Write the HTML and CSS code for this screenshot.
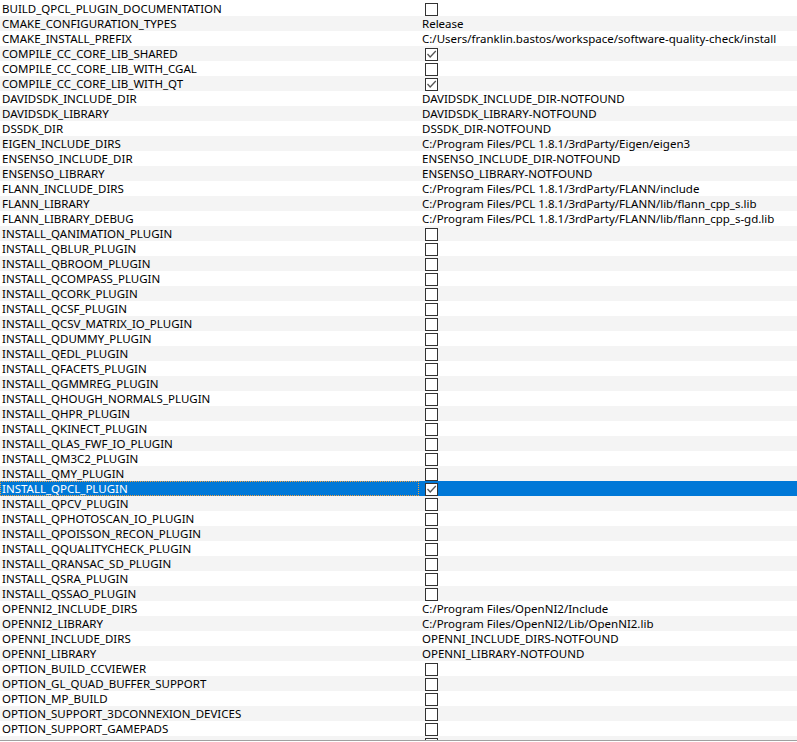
FILE: index.html
```html
<!DOCTYPE html>
<html>
<head>
<meta charset="utf-8">
<link rel="stylesheet" href="styles.css">
</head>
<body>
<div class="table">
<div class="row"><div class="name">BUILD_QPCL_PLUGIN_DOCUMENTATION</div><div class="value"><span class="cb"></span></div></div>
<div class="row"><div class="name">CMAKE_CONFIGURATION_TYPES</div><div class="value">Release</div></div>
<div class="row"><div class="name">CMAKE_INSTALL_PREFIX</div><div class="value">C:/Users/franklin.bastos/workspace/software-quality-check/install</div></div>
<div class="row"><div class="name">COMPILE_CC_CORE_LIB_SHARED</div><div class="value"><span class="cb"><svg viewBox="0 0 11 11" width="11" height="11"><polyline points="1.5,5 4.2,8 9.8,2" fill="none" stroke="#555" stroke-width="1.3"/></svg></span></div></div>
<div class="row"><div class="name">COMPILE_CC_CORE_LIB_WITH_CGAL</div><div class="value"><span class="cb"></span></div></div>
<div class="row"><div class="name">COMPILE_CC_CORE_LIB_WITH_QT</div><div class="value"><span class="cb"><svg viewBox="0 0 11 11" width="11" height="11"><polyline points="1.5,5 4.2,8 9.8,2" fill="none" stroke="#555" stroke-width="1.3"/></svg></span></div></div>
<div class="row"><div class="name">DAVIDSDK_INCLUDE_DIR</div><div class="value">DAVIDSDK_INCLUDE_DIR-NOTFOUND</div></div>
<div class="row"><div class="name">DAVIDSDK_LIBRARY</div><div class="value">DAVIDSDK_LIBRARY-NOTFOUND</div></div>
<div class="row"><div class="name">DSSDK_DIR</div><div class="value">DSSDK_DIR-NOTFOUND</div></div>
<div class="row"><div class="name">EIGEN_INCLUDE_DIRS</div><div class="value">C:/Program Files/PCL 1.8.1/3rdParty/Eigen/eigen3</div></div>
<div class="row"><div class="name">ENSENSO_INCLUDE_DIR</div><div class="value">ENSENSO_INCLUDE_DIR-NOTFOUND</div></div>
<div class="row"><div class="name">ENSENSO_LIBRARY</div><div class="value">ENSENSO_LIBRARY-NOTFOUND</div></div>
<div class="row"><div class="name">FLANN_INCLUDE_DIRS</div><div class="value">C:/Program Files/PCL 1.8.1/3rdParty/FLANN/include</div></div>
<div class="row"><div class="name">FLANN_LIBRARY</div><div class="value">C:/Program Files/PCL 1.8.1/3rdParty/FLANN/lib/flann_cpp_s.lib</div></div>
<div class="row"><div class="name">FLANN_LIBRARY_DEBUG</div><div class="value">C:/Program Files/PCL 1.8.1/3rdParty/FLANN/lib/flann_cpp_s-gd.lib</div></div>
<div class="row"><div class="name">INSTALL_QANIMATION_PLUGIN</div><div class="value"><span class="cb"></span></div></div>
<div class="row"><div class="name">INSTALL_QBLUR_PLUGIN</div><div class="value"><span class="cb"></span></div></div>
<div class="row"><div class="name">INSTALL_QBROOM_PLUGIN</div><div class="value"><span class="cb"></span></div></div>
<div class="row"><div class="name">INSTALL_QCOMPASS_PLUGIN</div><div class="value"><span class="cb"></span></div></div>
<div class="row"><div class="name">INSTALL_QCORK_PLUGIN</div><div class="value"><span class="cb"></span></div></div>
<div class="row"><div class="name">INSTALL_QCSF_PLUGIN</div><div class="value"><span class="cb"></span></div></div>
<div class="row"><div class="name">INSTALL_QCSV_MATRIX_IO_PLUGIN</div><div class="value"><span class="cb"></span></div></div>
<div class="row"><div class="name">INSTALL_QDUMMY_PLUGIN</div><div class="value"><span class="cb"></span></div></div>
<div class="row"><div class="name">INSTALL_QEDL_PLUGIN</div><div class="value"><span class="cb"></span></div></div>
<div class="row"><div class="name">INSTALL_QFACETS_PLUGIN</div><div class="value"><span class="cb"></span></div></div>
<div class="row"><div class="name">INSTALL_QGMMREG_PLUGIN</div><div class="value"><span class="cb"></span></div></div>
<div class="row"><div class="name">INSTALL_QHOUGH_NORMALS_PLUGIN</div><div class="value"><span class="cb"></span></div></div>
<div class="row"><div class="name">INSTALL_QHPR_PLUGIN</div><div class="value"><span class="cb"></span></div></div>
<div class="row"><div class="name">INSTALL_QKINECT_PLUGIN</div><div class="value"><span class="cb"></span></div></div>
<div class="row"><div class="name">INSTALL_QLAS_FWF_IO_PLUGIN</div><div class="value"><span class="cb"></span></div></div>
<div class="row"><div class="name">INSTALL_QM3C2_PLUGIN</div><div class="value"><span class="cb"></span></div></div>
<div class="row"><div class="name">INSTALL_QMY_PLUGIN</div><div class="value"><span class="cb"></span></div></div>
<div class="row selected"><div class="name"><span class="focus"></span>INSTALL_QPCL_PLUGIN</div><div class="value"><span class="cb"><svg viewBox="0 0 11 11" width="11" height="11"><polyline points="1.5,5 4.2,8 9.8,2" fill="none" stroke="#555" stroke-width="1.3"/></svg></span></div></div>
<div class="row"><div class="name">INSTALL_QPCV_PLUGIN</div><div class="value"><span class="cb"></span></div></div>
<div class="row"><div class="name">INSTALL_QPHOTOSCAN_IO_PLUGIN</div><div class="value"><span class="cb"></span></div></div>
<div class="row"><div class="name">INSTALL_QPOISSON_RECON_PLUGIN</div><div class="value"><span class="cb"></span></div></div>
<div class="row"><div class="name">INSTALL_QQUALITYCHECK_PLUGIN</div><div class="value"><span class="cb"></span></div></div>
<div class="row"><div class="name">INSTALL_QRANSAC_SD_PLUGIN</div><div class="value"><span class="cb"></span></div></div>
<div class="row"><div class="name">INSTALL_QSRA_PLUGIN</div><div class="value"><span class="cb"></span></div></div>
<div class="row"><div class="name">INSTALL_QSSAO_PLUGIN</div><div class="value"><span class="cb"></span></div></div>
<div class="row"><div class="name">OPENNI2_INCLUDE_DIRS</div><div class="value">C:/Program Files/OpenNI2/Include</div></div>
<div class="row"><div class="name">OPENNI2_LIBRARY</div><div class="value">C:/Program Files/OpenNI2/Lib/OpenNI2.lib</div></div>
<div class="row"><div class="name">OPENNI_INCLUDE_DIRS</div><div class="value">OPENNI_INCLUDE_DIRS-NOTFOUND</div></div>
<div class="row"><div class="name">OPENNI_LIBRARY</div><div class="value">OPENNI_LIBRARY-NOTFOUND</div></div>
<div class="row"><div class="name">OPTION_BUILD_CCVIEWER</div><div class="value"><span class="cb"></span></div></div>
<div class="row"><div class="name">OPTION_GL_QUAD_BUFFER_SUPPORT</div><div class="value"><span class="cb"></span></div></div>
<div class="row"><div class="name">OPTION_MP_BUILD</div><div class="value"><span class="cb"></span></div></div>
<div class="row"><div class="name">OPTION_SUPPORT_3DCONNEXION_DEVICES</div><div class="value"><span class="cb"></span></div></div>
<div class="row"><div class="name">OPTION_SUPPORT_GAMEPADS</div><div class="value"><span class="cb"></span></div></div>
<div class="row"><div class="name"></div><div class="value"><span class="cb"></span></div></div>
</div>
</body>
</html>
```
FILE: styles.css
```css
html, body {
  margin: 0;
  padding: 0;
  background: #ffffff;
}
body {
  width: 797px;
  height: 742px;
  overflow: hidden;
}
.table {
  height: 739px;
  padding-top: 1px;
  overflow: hidden;
  border-bottom: 1px solid #a0a0a0;
  font-family: "Noto Sans", "DejaVu Sans", sans-serif;
  font-size: 11.5px;
  color: #000;
}
.row {
  display: grid;
  grid-template-columns: 420px 1fr;
  height: 15px;
  line-height: 14px;
  white-space: nowrap;
}
.row:nth-child(even) {
  background: #f4f4f4;
}
.row.selected {
  background: #0078d7;
}
.row.selected .name {
  color: #ffffff;
}
.name {
  padding-left: 2px;
  padding-top: 1px;
  position: relative;
}
.focus {
  position: absolute;
  left: 0;
  top: 0;
  width: 417px;
  height: 13px;
  border: 1px dotted #f0a040;
}
.value {
  padding-left: 2px;
  padding-top: 1px;
}
.cb {
  display: block;
  box-sizing: border-box;
  width: 13px;
  height: 13px;
  margin-left: 3px;
  margin-top: 1px;
  border: 1px solid #333333;
  background: #ffffff;
}
.cb svg {
  display: block;
}
```
